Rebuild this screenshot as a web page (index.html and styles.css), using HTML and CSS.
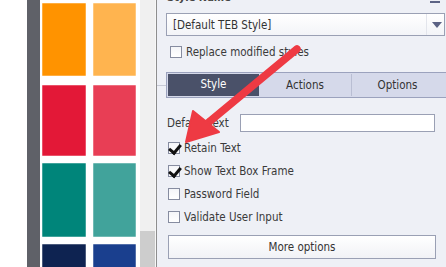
FILE: index.html
```html
<!DOCTYPE html>
<html lang="en">
<head>
  <meta charset="UTF-8" />
  <title>Text Entry Box - Properties</title>
  <link rel="stylesheet" href="styles.css">
</head>
<body>

  <div class="gutter"></div>
  <div class="rail"></div>

  <div class="swatches">
    <div class="swatch orange"></div>
    <div class="swatch orange-light"></div>
    <div class="swatch red"></div>
    <div class="swatch red-light"></div>
    <div class="swatch teal"></div>
    <div class="swatch teal-light"></div>
    <div class="swatch navy"></div>
    <div class="swatch blue"></div>
  </div>

  <div class="scrollbar">
    <div class="thumb"></div>
  </div>

  <div class="panel">
    <div class="panel-head">
      <span class="panel-title">Style Name</span>
      <span class="collapse"></span>
    </div>

    <div class="select">
      <span class="select-value">[Default TEB Style]</span>
      <span class="select-btn"><span class="caret"></span></span>
    </div>

    <label class="check replace">
      <span class="box"></span>
      Replace modified styles
    </label>

    <div class="tabs-row">
      <div class="tabs">
        <div class="tab active">Style</div>
        <div class="tab">Actions</div>
        <div class="tab">Options</div>
      </div>
    </div>

    <div class="field">
      <span class="field-label">Default Text</span>
      <span class="input"></span>
    </div>

    <label class="check"><span class="box checked"></span>Retain Text</label>
    <label class="check"><span class="box checked"></span>Show Text Box Frame</label>
    <label class="check"><span class="box"></span>Password Field</label>
    <label class="check"><span class="box"></span>Validate User Input</label>

    <button class="more-btn">More options</button>
  </div>

  <!-- callout arrow drawn over the panel -->
  <svg class="callout" width="446" height="267" viewBox="0 0 446 267">
    <g fill="#ee3a43" stroke="#ee3a43" stroke-linejoin="round">
      <line x1="297" y1="49" x2="203" y2="127" stroke-width="7.5" stroke-linecap="round"/>
      <polygon points="186,142 193,111 219,132" stroke-width="2"/>
    </g>
  </svg>

</body>
</html>
```

FILE: styles.css
```css
* {
  box-sizing: border-box;
}

body {
  margin: 0;
  width: 446px;
  height: 267px;
  overflow: hidden;
  display: flex;
  position: relative;
  background: #fff;
  font-family: "DejaVu Sans Condensed", "Liberation Sans", sans-serif;
  font-size: 11px;
  color: #333;
}

.gutter {
  width: 27px;
  background: #fff;
}

.rail {
  width: 13px;
  background: #5f6168;
}

.swatches {
  width: 100px;
  padding: 3px 4px 0 2px;
  display: grid;
  grid-template-columns: 44px 43px;
  grid-template-rows: 73px 73px 74px 30px;
  column-gap: 7px;
  row-gap: 7px;
  background: #fff;
}

.swatch {
  border-radius: 1px;
  border: 1px solid rgba(255,255,255,0.25);
}

.orange { background: #ff9300; }
.orange-light { background: #ffb44f; }
.red { background: #e31837; margin-top: 2px; }
.red-light { background: #e83e55; margin-top: 2px; }
.teal { background: #00857a; }
.teal-light { background: #41a39b; }
.navy { background: #0e2351; }
.blue { background: #1a3f8e; }

.scrollbar {
  width: 16px;
  background: #f0f0f0;
  border-right: 1px solid #f7f7f7;
  display: flex;
  flex-direction: column;
  justify-content: flex-end;
}

.thumb {
  height: 36px;
  background: #cdcdcd;
}

.panel {
  flex: 1;
  background: #eef0f6;
  border-left: 1px solid #8e8e8e;
  padding-left: 9px;
  display: flex;
  flex-direction: column;
}

.panel-head {
  height: 13px;
  margin-top: -9px;
  display: flex;
  align-items: flex-start;
  justify-content: space-between;
  padding-right: 6px;
}

.panel-title {
  font-weight: bold;
  color: #444;
  padding-left: 1px;
}

.collapse {
  width: 10px;
  height: 2px;
  margin-top: 10px;
  background: #5c6385;
}

.select {
  margin-top: 9px;
  margin-right: 1px;
  height: 23px;
  border: 1px solid #9aa0b4;
  background: linear-gradient(#ffffff, #f3f4f8);
  display: flex;
  align-items: center;
}

.select-value {
  flex: 1;
  padding-left: 6px;
  font-size: 11.5px;
  color: #333;
}

.select-btn {
  width: 18px;
  height: 100%;
  border-left: 1px solid #e3e5ec;
  display: flex;
  align-items: center;
  justify-content: center;
}

.caret {
  width: 0;
  height: 0;
  border-left: 5px solid transparent;
  border-right: 5px solid transparent;
  border-top: 6px solid #5c6385;
  margin-left: 2px;
}

.check {
  display: flex;
  align-items: center;
  height: 23px;
  padding-left: 2px;
  font-size: 11.5px;
  color: #3a3a3a;
}

.check.replace {
  margin-top: 4px;
  padding-left: 4px;
}

.box {
  width: 12px;
  height: 12px;
  margin-right: 4px;
  border: 1px solid #868ca0;
  background: linear-gradient(#f4f5f8, #ffffff);
  position: relative;
}

.box.checked::after {
  content: "";
  position: absolute;
  left: 2px;
  top: -1px;
  width: 5px;
  height: 9px;
  border-right: 3px solid #111;
  border-bottom: 3px solid #111;
  transform: rotate(40deg);
}

.tabs-row {
  margin-top: 9px;
  height: 26px;
  display: flex;
  align-items: center;
  margin-left: -9px;
}

.tabs-row::before {
  content: "";
  width: 9px;
  height: 1px;
  background: #c7cad6;
}

.tabs {
  flex: 1;
  height: 26px;
  display: flex;
  border: 1px solid #9ba2bd;
  border-right: none;
  background: #d5d9ea;
  padding: 1px 0 1px 1px;
}

.tab {
  width: 92px;
  display: flex;
  align-items: center;
  justify-content: center;
  padding-bottom: 1px;
  font-size: 11.5px;
  color: #333;
}

.tab + .tab {
  border-left: 1px solid #b9bed3;
}

.tab.active {
  width: 91px;
  background: #4a5169;
  color: #fff;
  padding-bottom: 3px;
}

.tab.active + .tab {
  border-left: none;
}

.field {
  margin-top: 16px;
  height: 18px;
  display: flex;
  align-items: center;
  margin-bottom: 4px;
}

.field-label {
  width: 74px;
  padding-left: 1px;
  font-size: 11.5px;
  color: #3a3a3a;
}

.input {
  width: 195px;
  height: 18px;
  border: 1px solid #9aa0b4;
  background: #fff;
}

.more-btn {
  margin-top: 7px;
  margin-left: 2px;
  width: 268px;
  height: 24px;
  border: 1px solid #9aa0b4;
  background: linear-gradient(#ffffff, #f1f2f6);
  font-family: inherit;
  font-size: 11.5px;
  color: #333;
  padding: 0;
}

.callout {
  position: absolute;
  left: 0;
  top: 0;
  pointer-events: none;
}
```
